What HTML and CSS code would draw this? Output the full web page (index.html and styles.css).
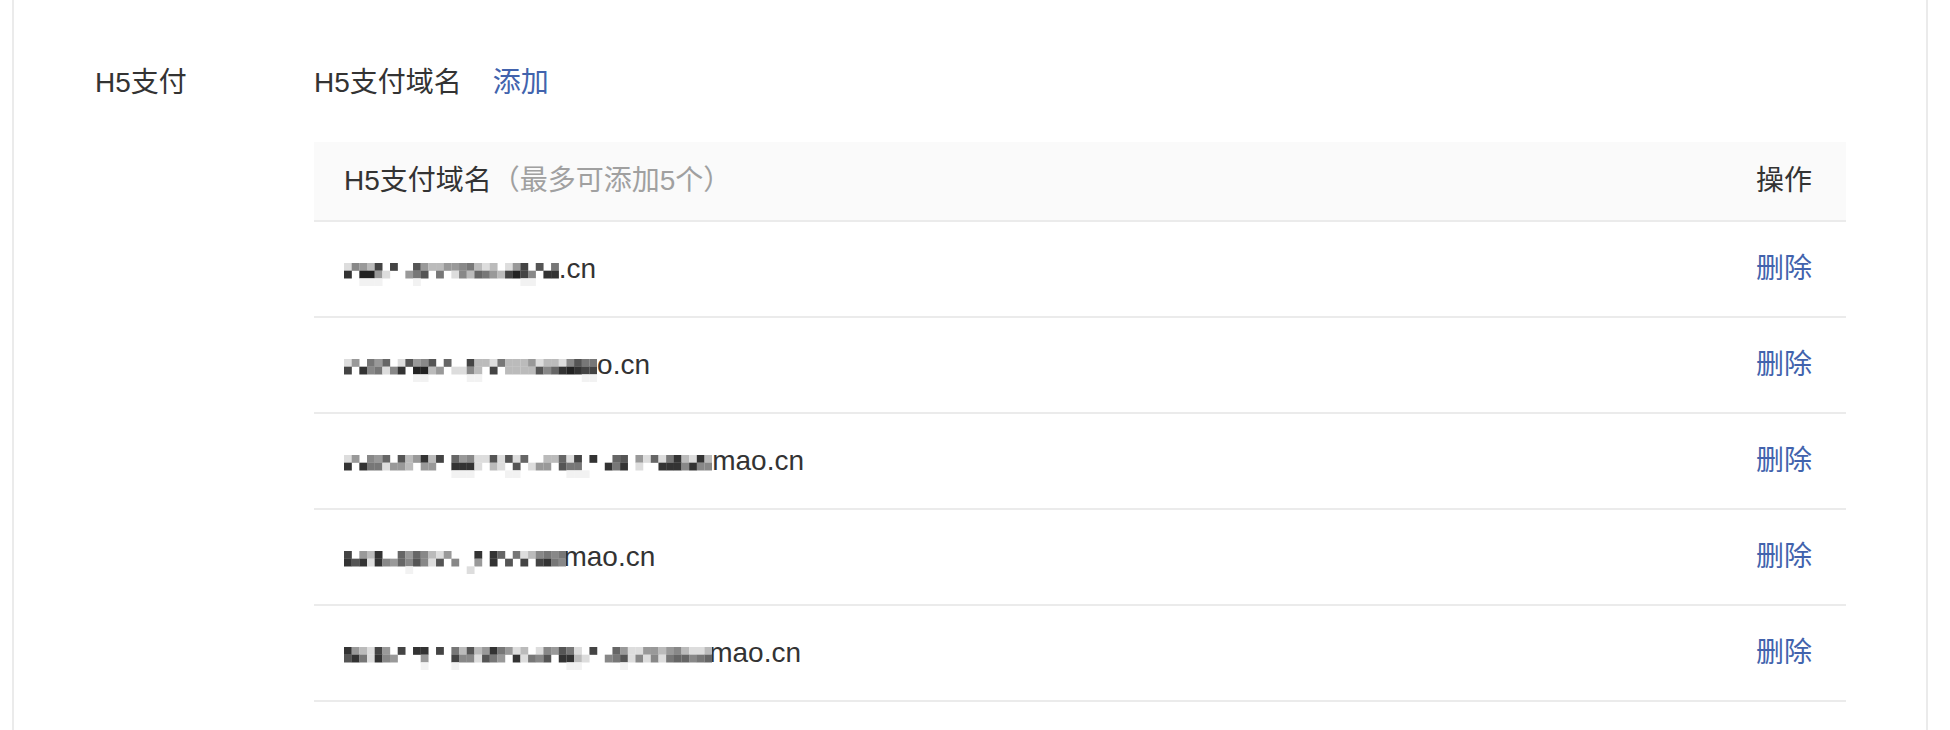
FILE: index.html
```html
<!DOCTYPE html>
<html lang="zh-CN">
<head>
<meta charset="utf-8">
<title>H5支付</title>
<link rel="stylesheet" href="styles.css">
</head>
<body>
<div class="card">
  <div class="section">
    <div class="section-label">H5支付</div>
    <div class="section-body">
      <div class="field-line"><span class="field-name">H5支付域名</span><a class="link add-link" href="#">添加</a></div>
      <div class="table">
        <div class="table-head">
          <div class="th">H5支付域名<span class="hint">（最多可添加5个）</span></div>
          <div class="th">操作</div>
        </div>
        <div class="table-row">
          <div class="domain"><span class="mosaic" data-top="96782.2..37887765898.972.3.5" data-bottom="1.0079..753.5.96845782026.11" data-third="..fff....f.............ff..."></span><span class="domain-text">.cn</span></div>
          <a class="link" href="#">删除</a>
        </div>
        <div class="table-row">
          <div class="domain"><span class="mosaic" data-top="97.574.93763.4..28895888798896355" data-bottom="2.165961.0087.9968.2.888836410122" data-third=".........ff.....ff.............ff"></span><span class="domain-text">o.cn</span></div>
          <a class="link" href="#">删除</a>
        </div>
        <div class="table-row">
          <div class="domain"><span class="mosaic" data-top="97.674.387182.4769939394..88492.1..43.7949518918" data-bottom="1.1559778.77..1119.89.3.977.355...151.9..1116166" data-third="..............fff....ff......fff................"></span><span class="domain-text">mao.cn</span></div>
          <a class="link" href="#">删除</a>
        </div>
        <div class="table-row">
          <div class="domain"><span class="mosaic" data-top="2.781..4746897...1.14.5986565" data-bottom="1319167463693.6..7.1.3.2.2156" data-third="........f.......9............"></span><span class="domain-text tucked">mao.cn</span></div>
          <a class="link" href="#">删除</a>
        </div>
        <div class="table-row">
          <div class="domain"><span class="mosaic" data-top="178927.2.11.2.5838715798.967359.2..4799778768998" data-bottom="3159167...7...2669357.19563.1189..65396969544654" data-third="..........f...f..............ff.....f..........."></span><span class="domain-text tucked">mao.cn</span></div>
          <a class="link" href="#">删除</a>
        </div>
      </div>
    </div>
  </div>
</div>
<script src="script.js"></script>
</body>
</html>
```
FILE: styles.css
```css
html, body {
  margin: 0;
  padding: 0;
  background: #ffffff;
}

body {
  font-family: "Liberation Sans", "Noto Sans CJK SC", sans-serif;
  font-size: 28px;
  color: #333333;
}

.card {
  box-sizing: border-box;
  width: 1916px;
  min-height: 730px;
  margin-left: 12px;
  border-left: 2px solid #ebebeb;
  border-right: 2px solid #ebebeb;
  padding: 63px 0 0 81px;
}

.section {
  display: flex;
}

.section-label {
  width: 219px;
  flex: none;
  line-height: 40px;
  white-space: nowrap;
}

.section-body {
  width: 1532px;
  flex: none;
}

.field-line {
  height: 40px;
  line-height: 40px;
  margin-bottom: 39px;
  white-space: nowrap;
}

.link {
  color: #4263ad;
  text-decoration: none;
}

.add-link {
  margin-left: 31px;
}

.table-head {
  display: flex;
  justify-content: space-between;
  align-items: center;
  height: 78px;
  padding: 0 34px 0 30px;
  background: #fafafa;
  border-bottom: 2px solid #ebebeb;
  line-height: 40px;
  white-space: nowrap;
}

.hint {
  color: #a0a0a0;
}

.table-row {
  display: flex;
  justify-content: space-between;
  align-items: center;
  height: 94px;
  padding: 0 34px 0 30px;
  border-bottom: 2px solid #ebebeb;
  line-height: 40px;
  white-space: nowrap;
}

.domain {
  white-space: nowrap;
}

.mosaic {
  display: inline-block;
  position: relative;
  z-index: 1;
  vertical-align: -8px;
}

.mosaic svg {
  display: block;
}

.domain-text.tucked {
  margin-left: -3px;
}
```
FILE: script.js
```js
(function () {
  var NS = "http://www.w3.org/2000/svg";
  var CELL = 7.67;
  var palette = {
    "0": "#222222", "1": "#333333", "2": "#444444", "3": "#555555",
    "4": "#666666", "5": "#777777", "6": "#888888", "7": "#999999",
    "8": "#bbbbbb", "9": "#dddddd", "f": "#f2f2f2"
  };
  var spans = document.querySelectorAll(".mosaic");
  for (var s = 0; s < spans.length; s++) {
    var el = spans[s];
    var rows = [el.getAttribute("data-top"), el.getAttribute("data-bottom"), el.getAttribute("data-third")];
    var n = rows[0].length;
    var svg = document.createElementNS(NS, "svg");
    svg.setAttribute("width", (n * CELL).toFixed(2));
    svg.setAttribute("height", (3 * CELL).toFixed(2));
    svg.setAttribute("viewBox", "0 0 " + n + " 3");
    svg.setAttribute("preserveAspectRatio", "none");
    for (var r = 0; r < rows.length; r++) {
      var row = rows[r];
      for (var i = 0; i < row.length; i++) {
        var c = palette[row.charAt(i)];
        if (!c) continue;
        var rect = document.createElementNS(NS, "rect");
        rect.setAttribute("x", i);
        rect.setAttribute("y", r);
        rect.setAttribute("width", 1.02);
        rect.setAttribute("height", 1.02);
        rect.setAttribute("fill", c);
        svg.appendChild(rect);
      }
    }
    el.appendChild(svg);
  }
})();
```
